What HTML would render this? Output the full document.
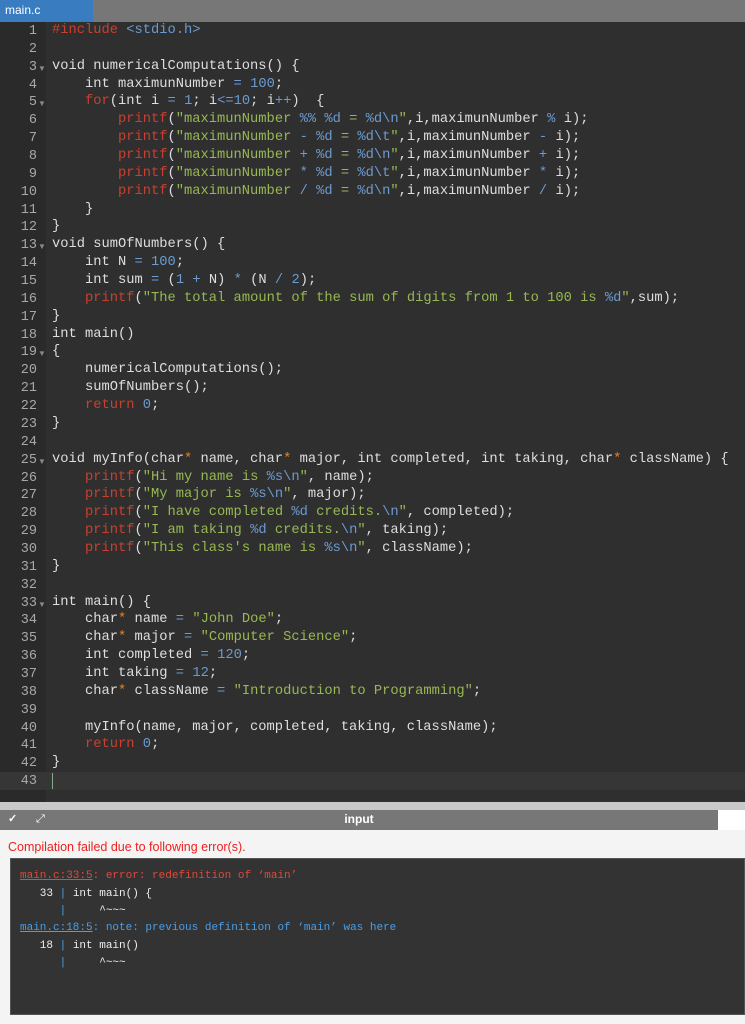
<!DOCTYPE html>
<html><head><meta charset="utf-8"><style>
*{margin:0;padding:0;box-sizing:border-box}
body{width:745px;height:1024px;background:#f4f4f4;font-family:"Liberation Sans",sans-serif;position:relative;overflow:hidden}
#tabbar{position:absolute;left:0;top:0;width:745px;height:22px;background:#777}
#tab{position:absolute;left:0;top:0;width:93px;height:22px;background:#3a7cc0;color:#fff;font-size:12px;line-height:20px;padding-left:5px}
#ed{position:absolute;left:0;top:22px;width:745px;height:780px;background:#2f2f2f}
#gut{position:absolute;left:0;top:0;width:46px;height:780px;background:#2a2a2a}
.ln{position:absolute;left:0;width:37px;text-align:right;color:#a8a8a8;font:13.5px "Liberation Mono",monospace}
.fd{position:absolute;left:38px;color:#888;font-size:8px}
.cl{position:absolute;left:52px;white-space:pre;color:#dedede;font:13.75px "Liberation Mono",monospace}
.k{color:#c9402e}.s{color:#97b852}.n{color:#6b9bd0}.o{color:#e0832a}
#sep{position:absolute;left:0;top:802px;width:745px;height:8px;background:#c8c8c8}
#ph{position:absolute;left:0;top:810px;width:718px;height:20px;background:#777;color:#fff;font-size:12px;font-weight:bold;text-align:center;line-height:18px}
#pw{position:absolute;left:718px;top:810px;width:27px;height:20px;background:#fff}
#err{position:absolute;left:8px;top:840px;color:#f02020;font-size:12.5px}
#box{position:absolute;left:10px;top:858px;width:735px;height:157px;background:#333;border:1px solid #555}
.e{position:absolute;left:9px;white-space:pre;font:11px "Liberation Mono",monospace;color:#eee}
.r{color:#e0483c}.b{color:#4a9ee6}.u{text-decoration:underline}
.bar{color:#4a9ee6}
</style></head><body>
<div id="tabbar"><div id="tab">main.c</div></div>
<div id="ed"><div id="gut"></div>
<div style="position:absolute;left:0;top:750px;width:745px;height:18px;background:#363636"></div>
<div style="position:absolute;left:52px;top:751px;width:1px;height:16px;background:#8a8"></div>
</div>
<div id="code" style="position:absolute;left:0;top:22px;width:745px">
</div>
<script>
var L=[
'<span class="k">#include</span> <span class="n">&lt;stdio.h&gt;</span>',
'',
'void numericalComputations() {',
'    int maximunNumber <span class="n">=</span> <span class="n">100</span>;',
'    <span class="k">for</span>(int i <span class="n">=</span> <span class="n">1</span>; i<span class="n">&lt;=10</span>; i<span class="n">++</span>)  {',
'        <span class="k">printf</span>(<span class="s">"maximunNumber <span class="n">%% %d</span> = <span class="n">%d\\n</span>"</span>,i,maximunNumber <span class="n">%</span> i);',
'        <span class="k">printf</span>(<span class="s">"maximunNumber <span class="n">- %d</span> = <span class="n">%d\\t</span>"</span>,i,maximunNumber <span class="n">-</span> i);',
'        <span class="k">printf</span>(<span class="s">"maximunNumber <span class="n">+ %d</span> = <span class="n">%d\\n</span>"</span>,i,maximunNumber <span class="n">+</span> i);',
'        <span class="k">printf</span>(<span class="s">"maximunNumber <span class="n">* %d</span> = <span class="n">%d\\t</span>"</span>,i,maximunNumber <span class="n">*</span> i);',
'        <span class="k">printf</span>(<span class="s">"maximunNumber <span class="n">/ %d</span> = <span class="n">%d\\n</span>"</span>,i,maximunNumber <span class="n">/</span> i);',
'    }',
'}',
'void sumOfNumbers() {',
'    int N <span class="n">=</span> <span class="n">100</span>;',
'    int sum <span class="n">=</span> (<span class="n">1</span> <span class="n">+</span> N) <span class="n">*</span> (N <span class="n">/</span> <span class="n">2</span>);',
'    <span class="k">printf</span>(<span class="s">"The total amount of the sum of digits from 1 to 100 is <span class="n">%d</span>"</span>,sum);',
'}',
'int main()',
'{',
'    numericalComputations();',
'    sumOfNumbers();',
'    <span class="k">return</span> <span class="n">0</span>;',
'}',
'',
'void myInfo(char<span class="o">*</span> name, char<span class="o">*</span> major, int completed, int taking, char<span class="o">*</span> className) {',
'    <span class="k">printf</span>(<span class="s">"Hi my name is <span class="n">%s\\n</span>"</span>, name);',
'    <span class="k">printf</span>(<span class="s">"My major is <span class="n">%s\\n</span>"</span>, major);',
'    <span class="k">printf</span>(<span class="s">"I have completed <span class="n">%d</span> credits.<span class="n">\\n</span>"</span>, completed);',
'    <span class="k">printf</span>(<span class="s">"I am taking <span class="n">%d</span> credits.<span class="n">\\n</span>"</span>, taking);',
'    <span class="k">printf</span>(<span class="s">"This class\'s name is <span class="n">%s\\n</span>"</span>, className);',
'}',
'',
'int main() {',
'    char<span class="o">*</span> name <span class="n">=</span> <span class="s">"John Doe"</span>;',
'    char<span class="o">*</span> major <span class="n">=</span> <span class="s">"Computer Science"</span>;',
'    int completed <span class="n">=</span> <span class="n">120</span>;',
'    int taking <span class="n">=</span> <span class="n">12</span>;',
'    char<span class="o">*</span> className <span class="n">=</span> <span class="s">"Introduction to Programming"</span>;',
'',
'    myInfo(name, major, completed, taking, className);',
'    <span class="k">return</span> <span class="n">0</span>;',
'}',
''];
var F={3:1,5:1,13:1,19:1,25:1,33:1};
var h='';for(var i=0;i<L.length;i++){var y=1+i*17.86;h+='<div class="ln" style="top:'+(y+1)+'px">'+(i+1)+'</div>'+(F[i+1]?'<div class="fd" style="top:'+(y+5)+'px">&#9660;</div>':'')+'<div class="cl" style="top:'+y+'px">'+L[i]+'</div>';}
document.getElementById('code').innerHTML=h;
</script>
<div id="sep"></div>
<div id="ph"><span style="position:absolute;left:8px;top:0;font-size:11px">&#10003;</span><span style="position:absolute;left:36px;top:0;font-size:11px;font-weight:normal">&#10530;</span>input</div>
<div id="pw"></div>
<div id="err">Compilation failed due to following error(s).</div>
<div id="box">
<div class="e" style="top:11px"><span class="r"><span class="u">main.c:33:5</span>: error: redefinition of ‘main’</span></div>
<div class="e" style="top:29px">   33 <span class="bar">|</span> int main() {</div>
<div class="e" style="top:46px">      <span class="bar">|</span>     ^~~~</div>
<div class="e" style="top:63px"><span class="b"><span class="u">main.c:18:5</span>: note: previous definition of ‘main’ was here</span></div>
<div class="e" style="top:81px">   18 <span class="bar">|</span> int main()</div>
<div class="e" style="top:98px">      <span class="bar">|</span>     ^~~~</div>
</div>
</body></html>
